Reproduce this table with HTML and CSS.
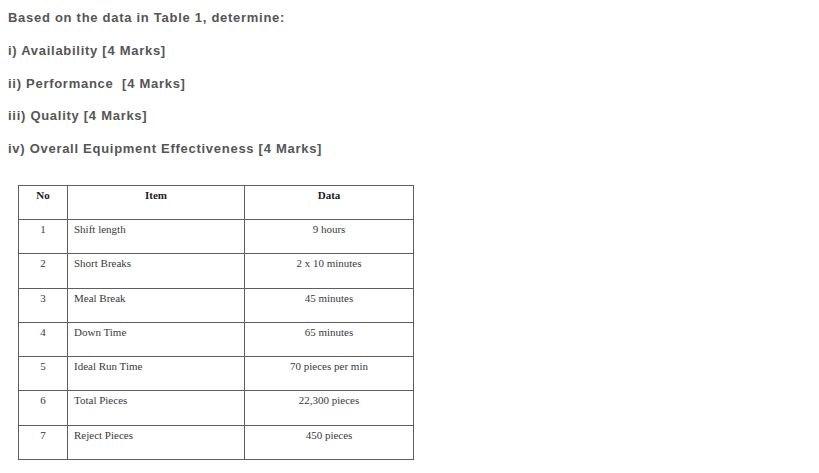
FILE: index.html
```html
<!DOCTYPE html>
<html>
<head>
<meta charset="utf-8">
<link rel="stylesheet" href="styles.css">
</head>
<body>
<div class="questions">
  <p class="q">Based on the data in Table 1, determine:</p>
  <p class="q">i) Availability [4 Marks]</p>
  <p class="q">ii) Performance&nbsp; [4 Marks]</p>
  <p class="q">iii) Quality [4 Marks]</p>
  <p class="q">iv) Overall Equipment Effectiveness [4 Marks]</p>
</div>
<table class="data-table">
  <colgroup>
    <col class="c-no">
    <col class="c-item">
    <col class="c-data">
  </colgroup>
  <thead>
    <tr><th>No</th><th>Item</th><th>Data</th></tr>
  </thead>
  <tbody>
    <tr><td class="num">1</td><td>Shift length</td><td class="val">9 hours</td></tr>
    <tr><td class="num">2</td><td>Short Breaks</td><td class="val">2 x 10 minutes</td></tr>
    <tr><td class="num">3</td><td>Meal Break</td><td class="val">45 minutes</td></tr>
    <tr><td class="num">4</td><td>Down Time</td><td class="val">65 minutes</td></tr>
    <tr><td class="num">5</td><td>Ideal Run Time</td><td class="val">70 pieces per min</td></tr>
    <tr><td class="num">6</td><td>Total Pieces</td><td class="val">22,300 pieces</td></tr>
    <tr><td class="num">7</td><td>Reject Pieces</td><td class="val">450 pieces</td></tr>
  </tbody>
</table>
</body>
</html>
```
FILE: styles.css
```css
html, body {
  margin: 0;
  padding: 0;
  background: #ffffff;
}

body {
  padding: 0 0 0 8px;
}

.questions {
  padding-top: 2px;
}

.q {
  margin: 0;
  font-family: "Liberation Sans", Arial, sans-serif;
  font-weight: bold;
  font-size: 13px;
  line-height: 32.75px;
  color: #555555;
  letter-spacing: 0.72px;
}

.data-table {
  margin: 19px 0 0 10px;
  border-collapse: collapse;
  table-layout: fixed;
  width: 395px;
  font-family: "Liberation Serif", "Times New Roman", serif;
  font-size: 11px;
  color: #3a3a3a;
}

.c-no { width: 49px; }
.c-item { width: 177px; }
.c-data { width: 169px; }

.data-table th,
.data-table td {
  border: 1px solid #5e5e5e;
  height: 34.25px;
  box-sizing: border-box;
  padding: 3px 6px 0 6px;
  vertical-align: top;
  text-align: left;
  line-height: 13px;
}

.data-table th {
  font-weight: bold;
  text-align: center;
  color: #222222;
}

.data-table td.num,
.data-table td.val {
  text-align: center;
}
```
